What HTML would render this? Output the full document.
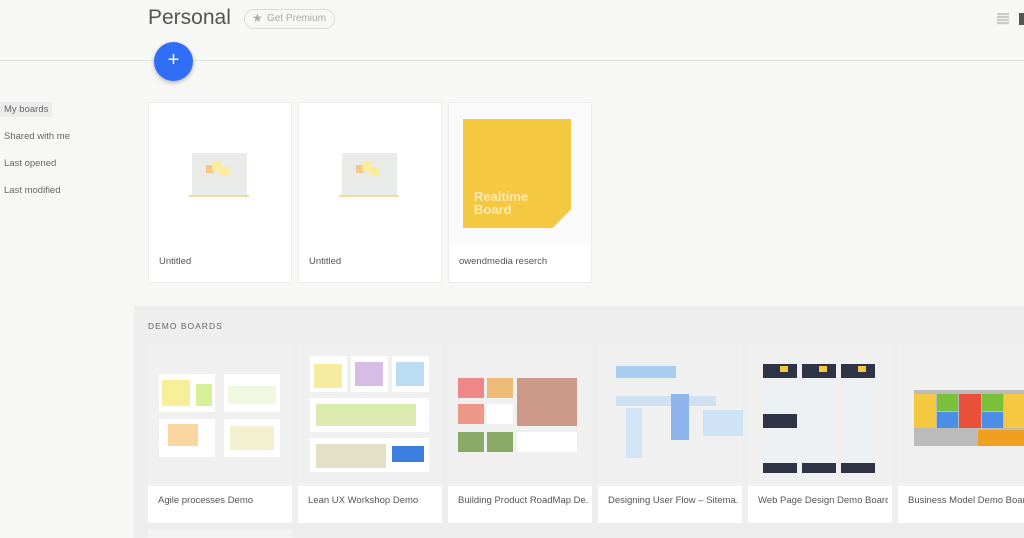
<!DOCTYPE html>
<html><head><meta charset="utf-8"><style>
*{margin:0;padding:0;box-sizing:border-box}
body{width:1024px;height:538px;overflow:hidden;background:#f7f7f6;font-family:"Liberation Sans",sans-serif;position:relative}
.abs{position:absolute}
.title{left:148px;top:6px;font-size:21px;color:#555;font-weight:300}
.prem{left:244px;top:9px;width:91px;height:20px;border:1px solid #ddd;border-radius:10px;font-size:10px;color:#aaa;line-height:18px;padding-left:22px}
.prem span{position:absolute;left:7px;top:-1px;font-size:12px;color:#aaa}
.hline{left:0;top:60px;width:1024px;height:1px;background:#e2e2e2}
.fab{left:154px;top:42px;width:39px;height:39px;border-radius:50%;background:#2f6ef5;box-shadow:0 2px 4px rgba(0,0,0,.25);color:#fff;font-size:20px;text-align:center;line-height:37px}
.nav{left:4px;font-size:9.5px;color:#666}
.sel{left:0;top:102px;width:52px;height:15px;background:#ececec}
.card{background:#fff;border:1px solid #eee;width:144px;height:181px;top:102px}
.card .lbl{position:absolute;left:10px;top:153px;font-size:9.5px;color:#555}
.demo{left:134px;top:306px;width:890px;height:232px;background:#eeeeee}
.dh{left:148px;top:321px;font-size:8.5px;letter-spacing:1px;color:#666}
.dc{top:344px;width:144px;height:179px;background:#fff}
.dc .th{position:absolute;left:0;top:0;width:144px;height:142px;background:#f0f0f0}
.dc .lbl{position:absolute;left:10px;top:151px;font-size:9.5px;color:#555;white-space:nowrap;overflow:hidden;width:130px}
.b{position:absolute}
</style></head><body>
<div class="abs title">Personal</div>
<div class="abs prem"><span>★</span>Get Premium</div>
<div class="abs" style="left:997px;top:13px;width:12px;height:12px;background:repeating-linear-gradient(#ccc 0 2px,#f0f0f0 2px 3px)"></div>
<div class="abs" style="left:1019px;top:13px;width:5px;height:12px;background:#555"></div>
<div class="abs hline"></div>
<div class="abs fab">+</div>
<div class="abs sel"></div>
<div class="abs nav" style="top:104px">My boards</div>
<div class="abs nav" style="top:131px">Shared with me</div>
<div class="abs nav" style="top:158px">Last opened</div>
<div class="abs nav" style="top:185px">Last modified</div>

<div class="abs card" style="left:148px"><div class="b" style="left:43px;top:50px;width:55px;height:42px;background:#e9ebe8"></div><div class="b" style="left:57px;top:62px;width:8px;height:8px;background:#f6c58c"></div><div class="b" style="left:63px;top:59px;width:9px;height:9px;background:#fbeb9c"></div><div class="b" style="left:71px;top:64px;width:9px;height:9px;background:#fbeb9c"></div><div class="b" style="left:40px;top:92px;width:60px;height:2px;background:#f1dc9c"></div><div class="lbl">Untitled</div></div>
<div class="abs card" style="left:298px"><div class="b" style="left:43px;top:50px;width:55px;height:42px;background:#e9ebe8"></div><div class="b" style="left:57px;top:62px;width:8px;height:8px;background:#f6c58c"></div><div class="b" style="left:63px;top:59px;width:9px;height:9px;background:#fbeb9c"></div><div class="b" style="left:71px;top:64px;width:9px;height:9px;background:#fbeb9c"></div><div class="b" style="left:40px;top:92px;width:60px;height:2px;background:#f1dc9c"></div><div class="lbl">Untitled</div></div>
<div class="abs card" style="left:448px"><div class="b" style="left:0;top:0;width:142px;height:142px;background:#fafafa"></div><div class="b" style="left:14px;top:16px;width:108px;height:109px;background:#f5c842;clip-path:polygon(0 0,100% 0,100% 83%,83% 100%,0 100%)"></div><div class="b" style="left:25px;top:87px;font-size:13px;font-weight:bold;color:#fbe9b0;line-height:13px">Realtime<br>Board</div><div class="lbl">owendmedia reserch</div></div>

<div class="abs demo"></div>
<div class="abs dh">DEMO BOARDS</div>

<div class="abs dc" style="left:148px"><div class="th">
<div class="b" style="left:11px;top:30px;width:56px;height:38px;background:#fff"></div><div class="b" style="left:14px;top:36px;width:28px;height:26px;background:#f7ef9a"></div><div class="b" style="left:48px;top:40px;width:16px;height:22px;background:#d8ef9a"></div>
<div class="b" style="left:76px;top:30px;width:56px;height:38px;background:#fff"></div><div class="b" style="left:80px;top:42px;width:48px;height:18px;background:#f1f8e0"></div>
<div class="b" style="left:11px;top:75px;width:56px;height:38px;background:#fff"></div><div class="b" style="left:20px;top:80px;width:30px;height:22px;background:#fbd6a0"></div>
<div class="b" style="left:76px;top:75px;width:56px;height:38px;background:#fff"></div><div class="b" style="left:82px;top:82px;width:44px;height:24px;background:#f4f1d0"></div>
</div><div class="lbl">Agile processes Demo</div></div>

<div class="abs dc" style="left:298px"><div class="th">
<div class="b" style="left:12px;top:12px;width:37px;height:36px;background:#fff"></div><div class="b" style="left:16px;top:20px;width:28px;height:24px;background:#f7eba0"></div>
<div class="b" style="left:53px;top:12px;width:37px;height:36px;background:#fff"></div><div class="b" style="left:57px;top:18px;width:28px;height:24px;background:#d7bde6"></div>
<div class="b" style="left:94px;top:12px;width:37px;height:36px;background:#fff"></div><div class="b" style="left:98px;top:18px;width:28px;height:24px;background:#bcdcf4"></div>
<div class="b" style="left:12px;top:54px;width:119px;height:34px;background:#fff"></div><div class="b" style="left:18px;top:60px;width:100px;height:22px;background:#dcebb0"></div>
<div class="b" style="left:12px;top:94px;width:119px;height:34px;background:#fff"></div><div class="b" style="left:18px;top:100px;width:70px;height:24px;background:#e4e0c8"></div><div class="b" style="left:94px;top:102px;width:32px;height:16px;background:#3a7fe0"></div>
</div><div class="lbl">Lean UX Workshop Demo</div></div>

<div class="abs dc" style="left:448px"><div class="th">
<div class="b" style="left:10px;top:34px;width:26px;height:20px;background:#e88"></div><div class="b" style="left:39px;top:34px;width:26px;height:20px;background:#eb7"></div>
<div class="b" style="left:69px;top:34px;width:60px;height:48px;background:#c98"></div>
<div class="b" style="left:10px;top:60px;width:26px;height:20px;background:#e98"></div><div class="b" style="left:39px;top:60px;width:26px;height:20px;background:#fff"></div>
<div class="b" style="left:10px;top:88px;width:26px;height:20px;background:#8a6"></div><div class="b" style="left:39px;top:88px;width:26px;height:20px;background:#8a6"></div><div class="b" style="left:69px;top:88px;width:60px;height:20px;background:#fff"></div>
</div><div class="lbl">Building Product RoadMap De...</div></div>

<div class="abs dc" style="left:598px"><div class="th">
<div class="b" style="left:18px;top:22px;width:60px;height:12px;background:#a8cdee"></div>
<div class="b" style="left:18px;top:52px;width:100px;height:10px;background:#cfe0f0"></div>
<div class="b" style="left:73px;top:50px;width:18px;height:46px;background:#8fb6ec"></div>
<div class="b" style="left:28px;top:64px;width:16px;height:50px;background:#d2e5f6"></div>
<div class="b" style="left:105px;top:66px;width:40px;height:26px;background:#cfe3f6"></div>
</div><div class="lbl">Designing User Flow – Sitema...</div></div>

<div class="abs dc" style="left:748px"><div class="th">
<div class="b" style="left:15px;top:20px;width:34px;height:110px;background:#eef1f4"></div><div class="b" style="left:54px;top:20px;width:34px;height:110px;background:#eef1f4"></div><div class="b" style="left:93px;top:20px;width:34px;height:110px;background:#eef1f4"></div>
<div class="b" style="left:15px;top:20px;width:34px;height:14px;background:#2e3445"></div><div class="b" style="left:54px;top:20px;width:34px;height:14px;background:#2e3445"></div><div class="b" style="left:93px;top:20px;width:34px;height:14px;background:#2e3445"></div>
<div class="b" style="left:15px;top:70px;width:34px;height:14px;background:#2e3445"></div>
<div class="b" style="left:15px;top:119px;width:34px;height:10px;background:#2e3445"></div><div class="b" style="left:54px;top:119px;width:34px;height:10px;background:#2e3445"></div><div class="b" style="left:93px;top:119px;width:34px;height:10px;background:#2e3445"></div>
<div class="b" style="left:32px;top:22px;width:8px;height:6px;background:#f5c842"></div><div class="b" style="left:71px;top:22px;width:8px;height:6px;background:#f5c842"></div><div class="b" style="left:110px;top:22px;width:8px;height:6px;background:#f5c842"></div>
</div><div class="lbl">Web Page Design Demo Board</div></div>

<div class="abs dc" style="left:898px"><div class="th">
<div class="b" style="left:16px;top:46px;width:128px;height:56px;background:#bbb"></div>
<div class="b" style="left:16px;top:50px;width:22px;height:34px;background:#f5c842"></div>
<div class="b" style="left:39px;top:50px;width:21px;height:17px;background:#79c13b"></div>
<div class="b" style="left:39px;top:68px;width:21px;height:16px;background:#4a8ee8"></div>
<div class="b" style="left:61px;top:50px;width:22px;height:34px;background:#e8503a"></div>
<div class="b" style="left:84px;top:50px;width:21px;height:17px;background:#79c13b"></div>
<div class="b" style="left:84px;top:68px;width:21px;height:16px;background:#4a8ee8"></div>
<div class="b" style="left:106px;top:50px;width:38px;height:34px;background:#f5c842"></div>
<div class="b" style="left:80px;top:86px;width:64px;height:16px;background:#f0a020"></div>
</div><div class="lbl">Business Model Demo Board</div></div>

<div class="abs" style="left:148px;top:530px;width:144px;height:8px;background:#f3f3f3"></div>
</body></html>
